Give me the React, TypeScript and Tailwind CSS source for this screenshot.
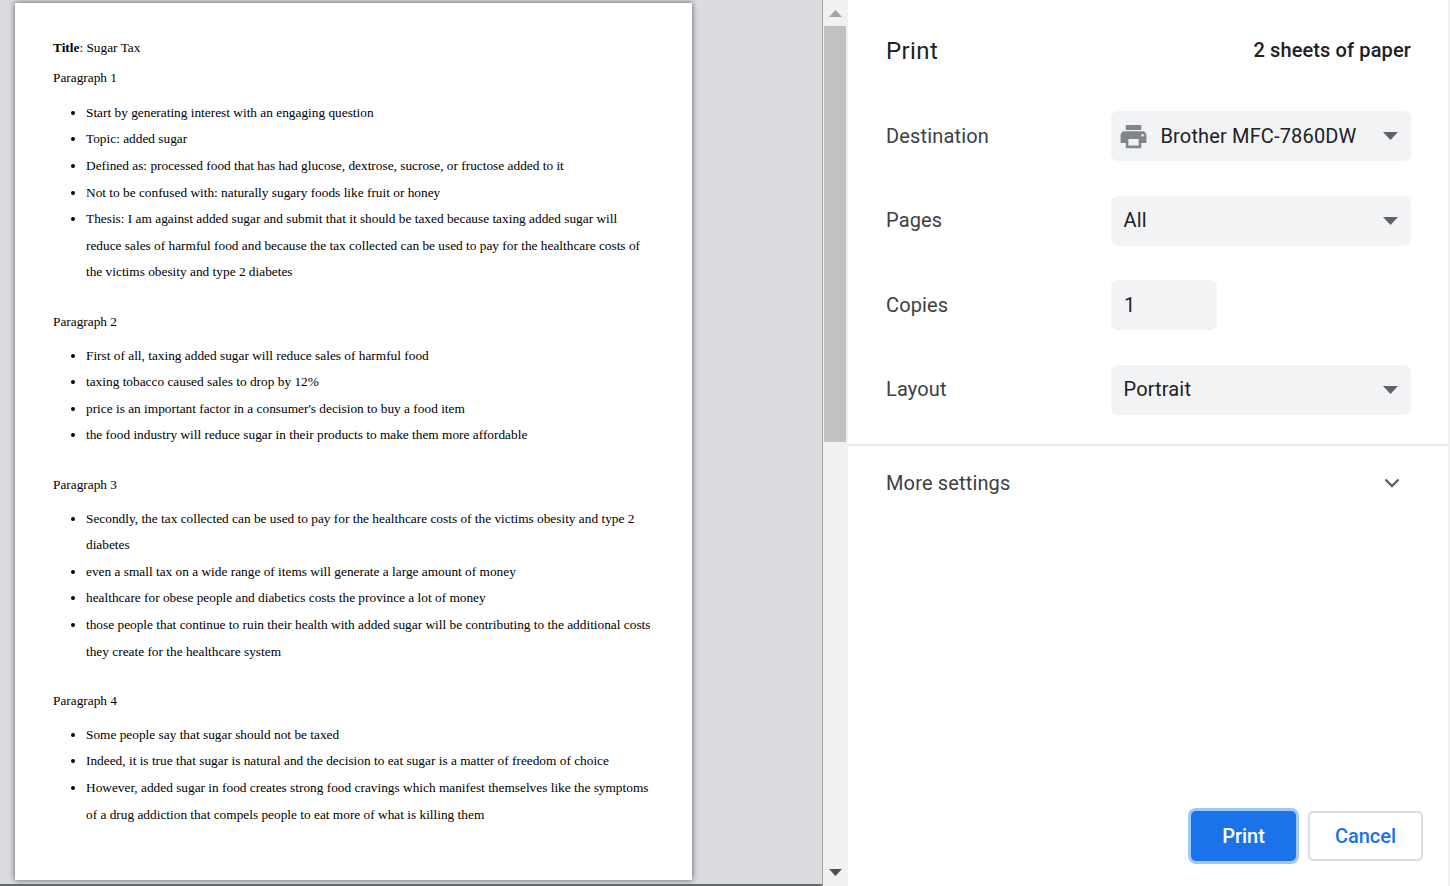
import { ReactNode } from 'react'

const sections = [
  {
    title: 'Paragraph 1',
    items: [
      'Start by generating interest with an engaging question',
      'Topic: added sugar',
      'Defined as: processed food that has had glucose, dextrose, sucrose, or fructose added to it',
      'Not to be confused with: naturally sugary foods like fruit or honey',
      'Thesis: I am against added sugar and submit that it should be taxed because taxing added sugar will reduce sales of harmful food and because the tax collected can be used to pay for the healthcare costs of the victims obesity and type 2 diabetes',
    ],
  },
  {
    title: 'Paragraph 2',
    items: [
      'First of all, taxing added sugar will reduce sales of harmful food',
      'taxing tobacco caused sales to drop by 12%',
      "price is an important factor in a consumer's decision to buy a food item",
      'the food industry will reduce sugar in their products to make them more affordable',
    ],
  },
  {
    title: 'Paragraph 3',
    items: [
      'Secondly, the tax collected can be used to pay for the healthcare costs of the victims obesity and type 2 diabetes',
      'even a small tax on a wide range of items will generate a large amount of money',
      'healthcare for obese people and diabetics costs the province a lot of money',
      'those people that continue to ruin their health with added sugar will be contributing to the additional costs they create for the healthcare system',
    ],
  },
  {
    title: 'Paragraph 4',
    items: [
      'Some people say that sugar should not be taxed',
      'Indeed, it is true that sugar is natural and the decision to eat sugar is a matter of freedom of choice',
      'However, added sugar in food creates strong food cravings which manifest themselves like the symptoms of a drug addiction that compels people to eat more of what is killing them',
    ],
  },
]

function Caret() {
  return (
    <svg width="15" height="8" viewBox="0 0 15 8" className="shrink-0 fill-[#5f6368]">
      <path d="M0 0h15L7.5 8z" />
    </svg>
  )
}

function Row({ label, raised, children }: { label: string; raised?: boolean; children: ReactNode }) {
  return (
    <div className="flex items-center h-[50px]">
      <div className={raised ? 'w-[225px] pb-[2px] text-[20px] tracking-[0.15px] text-[#3c4043]' : 'w-[225px] text-[20px] tracking-[0.15px] text-[#3c4043]'}>
        {label}
      </div>
      {children}
    </div>
  )
}

function Select({ value, icon, raised }: { value: string; icon?: boolean; raised?: boolean }) {
  return (
    <div className="flex items-center w-[300px] h-[50px] rounded-[7px] bg-[#f1f3f4] pl-[12.5px] pr-[13px] text-[20px] tracking-[0.15px] text-[#202124]">
      {icon && (
        <svg width="31" height="31" viewBox="0 0 24 24" className="-ml-[6px] mr-[12px] fill-[#80868b] shrink-0">
          <path d="M19 8H5c-1.66 0-3 1.34-3 3v6h4v4h12v-4h4v-6c0-1.66-1.34-3-3-3zm-3 11H8v-5h8v5zm3-7c-.55 0-1-.45-1-1s.45-1 1-1 1 .45 1 1-.45 1-1 1zm-1-9H6v4h12V3z" />
        </svg>
      )}
      <span className={raised ? 'flex-1 pb-[2px]' : 'flex-1'}>{value}</span>
      <Caret />
    </div>
  )
}

export default function App() {
  return (
    <div className="flex h-[886px] w-[1450px] overflow-hidden bg-white font-['Roboto',sans-serif]">
      {/* preview area */}
      <div className="w-[822px] h-full bg-[#dadce0] border-b-2 border-[#666a6e] pl-[15px] pt-[3px]">
        <div className="w-[677px] h-[877px] bg-white shadow-[0_0_6px_rgba(0,0,0,0.6)] pl-[38px] pr-[40px] pt-[37px] font-['Liberation_Serif',serif] text-[13.33px] text-black">
          <p className="leading-[15px] mb-[15px]">
            <b>Title</b>: Sugar Tax
          </p>
          {sections.map((s, i) => (
            <div key={s.title} className="mb-[27.9px]">
              <p className={i === 0 ? 'leading-[15px] mb-[14.9px]' : 'leading-[15px] mb-[13.7px]'}>{s.title}</p>
              <ul className="list-disc pl-[33px] leading-[26.6px]">
                {s.items.map((item) => (
                  <li key={item}>{item}</li>
                ))}
              </ul>
            </div>
          ))}
        </div>
      </div>

      {/* scrollbar */}
      <div className="flex flex-col items-center w-[26px] h-full bg-[#f1f1f1] border-l border-[#a0a0a0] pl-px pr-[2px]">
        <svg width="13" height="7" viewBox="0 0 13 7" className="mt-[10px] mb-[9px] shrink-0 fill-[#a3a3a3]">
          <path d="M6.5 0L13 7H0z" />
        </svg>
        <div className="w-[22px] h-[416px] shrink-0 bg-[#c1c1c1]" />
        <svg width="13" height="7" viewBox="0 0 13 7" className="mt-[427px] shrink-0 fill-[#505050]">
          <path d="M0 0h13L6.5 7z" />
        </svg>
      </div>

      {/* settings */}
      <div className="flex flex-col flex-1 h-full border-r-2 border-[#f1f1f1]">
        <div className="flex items-center justify-between h-[36px] mt-[33px] pl-[38px] pr-[37px] text-[#202124]">
          <span className="text-[24px] tracking-[0.4px]">Print</span>
          <span className="pb-[2px] text-[20px] font-medium tracking-[0.12px]">2 sheets of paper</span>
        </div>
        <div className="flex flex-col gap-[34.5px] mt-[42px] pl-[38px]">
          <Row label="Destination">
            <Select value="Brother MFC-7860DW" icon />
          </Row>
          <Row label="Pages" raised>
            <Select value="All" raised />
          </Row>
          <Row label="Copies">
            <div className="flex items-center w-[106px] h-[50px] rounded-[7px] bg-[#f1f3f4] pl-[13px] text-[20px] text-[#202124]">1</div>
          </Row>
          <Row label="Layout" raised>
            <Select value="Portrait" raised />
          </Row>
        </div>
        <div className="h-[2px] bg-[#e8eaed] mt-[29px]" />
        <div className="flex items-center justify-between h-[74px] pl-[38px] pr-[48px] text-[20px] tracking-[0.15px] text-[#3c4043]">
          <span>More settings</span>
          <svg width="16" height="10" viewBox="0 0 16 10" className="fill-none stroke-[#5f6368] stroke-[2.4px]">
            <path d="M1.5 1.5L8 8l6.5-6.5" />
          </svg>
        </div>
        <div className="flex-1" />
        <div className="flex items-center justify-end gap-[12px] pr-[25px] mb-[25px] text-[20px] font-medium">
          <button className="flex items-center justify-center w-[105px] h-[50px] rounded-[5px] bg-[#1a73e8] text-white ring-[3px] ring-[#a1c6f8]">
            Print
          </button>
          <button className="flex items-center justify-center w-[115px] h-[50px] rounded-[5px] border-2 border-[#dadce0] bg-white text-[#1a73e8]">
            Cancel
          </button>
        </div>
      </div>
    </div>
  )
}
